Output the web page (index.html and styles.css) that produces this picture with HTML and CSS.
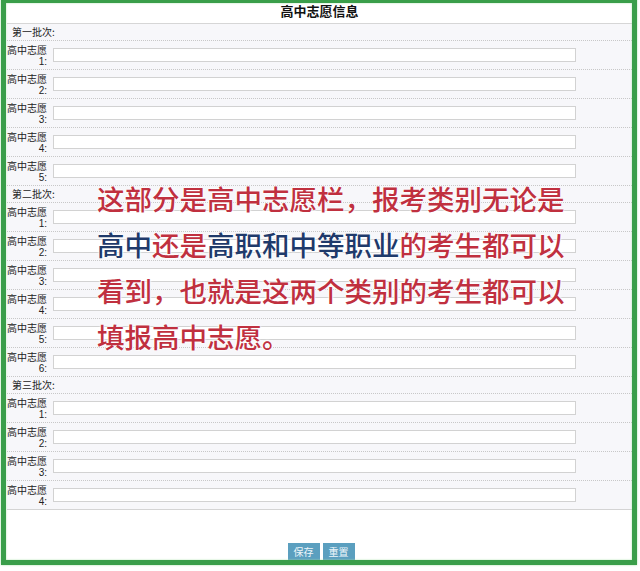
FILE: index.html
```html
<!DOCTYPE html>
<html lang="zh-CN">
<head>
<meta charset="utf-8">
<title>高中志愿信息</title>
<link rel="stylesheet" href="styles.css">
</head>
<body>
<div class="page">
  <div class="title">高中志愿信息</div>
  <div class="rows">
    <div class="batch">第一批次:</div>
    <div class="entry"><div class="label"><span class="l1">高中志愿</span><span class="l2">1:</span></div><div class="input"></div></div>
    <div class="entry"><div class="label"><span class="l1">高中志愿</span><span class="l2">2:</span></div><div class="input"></div></div>
    <div class="entry"><div class="label"><span class="l1">高中志愿</span><span class="l2">3:</span></div><div class="input"></div></div>
    <div class="entry"><div class="label"><span class="l1">高中志愿</span><span class="l2">4:</span></div><div class="input"></div></div>
    <div class="entry"><div class="label"><span class="l1">高中志愿</span><span class="l2">5:</span></div><div class="input"></div></div>
    <div class="batch">第二批次:</div>
    <div class="entry"><div class="label"><span class="l1">高中志愿</span><span class="l2">1:</span></div><div class="input"></div></div>
    <div class="entry"><div class="label"><span class="l1">高中志愿</span><span class="l2">2:</span></div><div class="input"></div></div>
    <div class="entry"><div class="label"><span class="l1">高中志愿</span><span class="l2">3:</span></div><div class="input"></div></div>
    <div class="entry"><div class="label"><span class="l1">高中志愿</span><span class="l2">4:</span></div><div class="input"></div></div>
    <div class="entry"><div class="label"><span class="l1">高中志愿</span><span class="l2">5:</span></div><div class="input"></div></div>
    <div class="entry"><div class="label"><span class="l1">高中志愿</span><span class="l2">6:</span></div><div class="input"></div></div>
    <div class="batch">第三批次:</div>
    <div class="entry"><div class="label"><span class="l1">高中志愿</span><span class="l2">1:</span></div><div class="input"></div></div>
    <div class="entry"><div class="label"><span class="l1">高中志愿</span><span class="l2">2:</span></div><div class="input"></div></div>
    <div class="entry"><div class="label"><span class="l1">高中志愿</span><span class="l2">3:</span></div><div class="input"></div></div>
    <div class="entry last"><div class="label"><span class="l1">高中志愿</span><span class="l2">4:</span></div><div class="input"></div></div>
  </div>
  <div class="buttons">
    <span class="btn">保存</span>
    <span class="btn">重置</span>
  </div>
</div>
<div class="note">
  <div class="line"><span class="red">这部分是高中志愿栏，报考类别无论是</span></div>
  <div class="line"><span class="blue">高中</span><span class="red">还是</span><span class="blue">高职和中等职业</span><span class="red">的考生都可以</span></div>
  <div class="line"><span class="red">看到，也就是这两个类别的考生都可以</span></div>
  <div class="line"><span class="red">填报高中志愿。</span></div>
</div>
<div class="frame"></div>
</body>
</html>
```

FILE: styles.css
```css
html, body {
  margin: 0;
  padding: 0;
  background: #ffffff;
}
body {
  width: 640px;
  height: 571px;
  overflow: hidden;
  position: relative;
  font-family: "Noto Sans CJK SC", "Liberation Sans", sans-serif;
  color: #222;
}
.page {
  padding: 0 8px 0 7px;
}
.title {
  height: 23px;
  line-height: 22px;
  text-align: center;
  font-weight: bold;
  font-size: 13px;
  color: #111;
  border-bottom: 1px solid #d6d6d6;
  background: #ffffff;
}
.rows {
  background: #f7f7fa;
}
.batch {
  height: 16px;
  line-height: 15px;
  font-size: 10px;
  padding-left: 5px;
  border-bottom: 1px dotted #c8c8c8;
}
.entry {
  height: 28px;
  display: flex;
  align-items: center;
  gap: 6px;
  border-bottom: 1px dotted #c8c8c8;
}
.entry.last {
  border-bottom: 1px solid #d4d4d4;
}
.label {
  width: 40px;
  display: flex;
  flex-direction: column;
  align-items: flex-end;
  font-size: 10px;
  color: #222;
}
.l1 {
  line-height: 14px;
  height: 13px;
}
.l2 {
  font-family: "Liberation Sans", sans-serif;
  line-height: 12px;
  height: 12px;
}
.input {
  width: 521px;
  height: 12px;
  background: #ffffff;
  border: 1px solid #d2d2d2;
}
.buttons {
  display: flex;
  justify-content: center;
  gap: 3px;
  padding-top: 33px;
  padding-left: 3px;
}
.btn {
  width: 32px;
  height: 18px;
  line-height: 18px;
  text-align: center;
  font-size: 10px;
  color: #eef6fa;
  background: #5b9fbf;
}
.note {
  position: absolute;
  left: 97px;
  top: 175px;
  font-size: 27.5px;
  line-height: 46px;
  font-weight: 500;
  white-space: nowrap;
  text-shadow: 0 0 2px #fff, 0 0 2px #fff, 0 0 3px #fff;
}
.red {
  color: #c0303f;
}
.blue {
  color: #1f3a6b;
}
.frame {
  position: absolute;
  left: 1px;
  top: -2px;
  width: 636px;
  height: 567px;
  box-sizing: border-box;
  border: 5px solid #3a9e4a;
  box-shadow: 0 0 2px #a8e0a8, inset 0 0 2px #a8e0a8;
}
```
